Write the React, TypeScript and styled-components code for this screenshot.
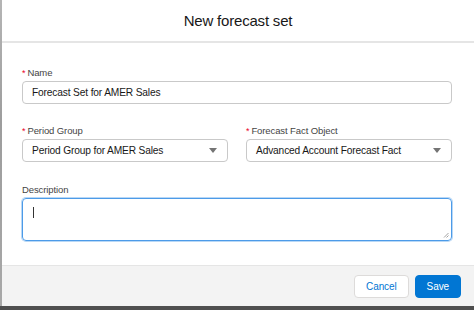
import React from "react";
import styled, { createGlobalStyle } from "styled-components";

const GlobalStyle = createGlobalStyle`
  html, body {
    margin: 0;
    padding: 0;
    background: #ffffff;
  }
  body {
    font-family: "Liberation Sans", Arial, sans-serif;
    color: #181818;
    -webkit-font-smoothing: antialiased;
  }
`;

const Screen = styled.div`
  width: 474px;
  height: 310px;
  display: flex;
  flex-direction: column;
  overflow: hidden;
  background: #ffffff;
`;

const Frame = styled.div`
  flex: 1;
  display: flex;
  min-height: 0;
`;

const LeftEdge = styled.div`
  width: 2px;
  background: linear-gradient(#b5b5b5, #9d9d9d 40%, #a8a8a8);
`;

const Modal = styled.div`
  flex: 1;
  display: flex;
  flex-direction: column;
  min-width: 0;
`;

const Header = styled.header`
  height: 41px;
  display: flex;
  align-items: center;
  justify-content: center;
  border-bottom: 2px solid #e5e5e5;
`;

const Title = styled.h2`
  margin: 0;
  font-size: 15px;
  letter-spacing: -0.2px;
  font-weight: 400;
  color: #181818;
`;

const Body = styled.div`
  flex: 1;
  padding: 24px 22px 0 20px;
  display: flex;
  flex-direction: column;
  gap: 21px;
`;

const Row = styled.div`
  display: grid;
  grid-template-columns: 1fr 1fr;
  column-gap: 18px;
`;

const Field = styled.div<{ $pushed?: boolean }>`
  display: flex;
  flex-direction: column;
  gap: 2px;
  margin-top: ${(p) => (p.$pushed ? "1px" : "0")};
`;

const Label = styled.label`
  font-size: 9.5px;
  letter-spacing: -0.1px;
  line-height: 12px;
  color: #444444;
  display: flex;
  align-items: center;
`;

const Required = styled.span`
  color: #ea001e;
  margin-right: 2px;
  font-size: 9px;
`;

const Input = styled.div`
  height: 23px;
  box-sizing: border-box;
  border: 1px solid #c9c9c9;
  border-radius: 4px;
  padding: 0 9px;
  display: flex;
  align-items: center;
  font-size: 10.2px;
  letter-spacing: -0.15px;
  color: #181818;
  background: #ffffff;
`;

const Select = styled(Input)`
  justify-content: space-between;
`;

const Caret = styled.span`
  width: 0;
  height: 0;
  border-left: 4px solid transparent;
  border-right: 4px solid transparent;
  border-top: 5px solid #747474;
  margin-right: 1px;
`;

const TextArea = styled.div`
  position: relative;
  height: 43px;
  box-sizing: border-box;
  border: 1px solid #4c9be8;
  box-shadow: 0 0 0 1px #b9d8f6;
  border-radius: 4px;
  padding: 8px 9px;
`;

const Cursor = styled.span`
  display: block;
  width: 1px;
  height: 11px;
  background: #333333;
  margin-left: 1px;
`;

const Grip = styled.svg`
  position: absolute;
  right: 2px;
  bottom: 2px;
`;

const Footer = styled.footer`
  height: 41px;
  box-sizing: border-box;
  background: #f3f3f3;
  border-top: 1px solid #e5e5e5;
  display: flex;
  align-items: center;
  justify-content: flex-end;
  gap: 6px;
  padding: 0 13px 0 0;
`;

const Button = styled.button<{ $brand?: boolean }>`
  height: 23px;
  border-radius: 4px;
  font-family: inherit;
  font-size: 10px;
  letter-spacing: -0.1px;
  padding: 0 11px;
  border: 1px solid ${(p) => (p.$brand ? "#0176d3" : "#dddbda")};
  background: ${(p) => (p.$brand ? "#0176d3" : "#ffffff")};
  color: ${(p) => (p.$brand ? "#ffffff" : "#0176d3")};
`;

const BottomBar = styled.div`
  height: 4px;
  background: #4f4f4f;
`;

export default function App() {
  return (
    <Screen>
      <GlobalStyle />
      <Frame>
        <LeftEdge />
        <Modal>
          <Header>
            <Title>New forecast set</Title>
          </Header>
          <Body>
            <Field>
              <Label>
                <Required>*</Required>Name
              </Label>
              <Input>Forecast Set for AMER Sales</Input>
            </Field>
            <Row>
              <Field>
                <Label>
                  <Required>*</Required>Period Group
                </Label>
                <Select>
                  Period Group for AMER Sales
                  <Caret />
                </Select>
              </Field>
              <Field>
                <Label>
                  <Required>*</Required>Forecast Fact Object
                </Label>
                <Select>
                  Advanced Account Forecast Fact
                  <Caret />
                </Select>
              </Field>
            </Row>
            <Field $pushed>
              <Label>Description</Label>
              <TextArea>
                <Cursor />
                <Grip width="6" height="6" viewBox="0 0 6 6">
                  <path d="M1 5.5L5.5 1M3.5 5.5L5.5 3.5" stroke="#8a8a8a" strokeWidth="0.8" />
                </Grip>
              </TextArea>
            </Field>
          </Body>
          <Footer>
            <Button>Cancel</Button>
            <Button $brand>Save</Button>
          </Footer>
        </Modal>
      </Frame>
      <BottomBar />
    </Screen>
  );
}
